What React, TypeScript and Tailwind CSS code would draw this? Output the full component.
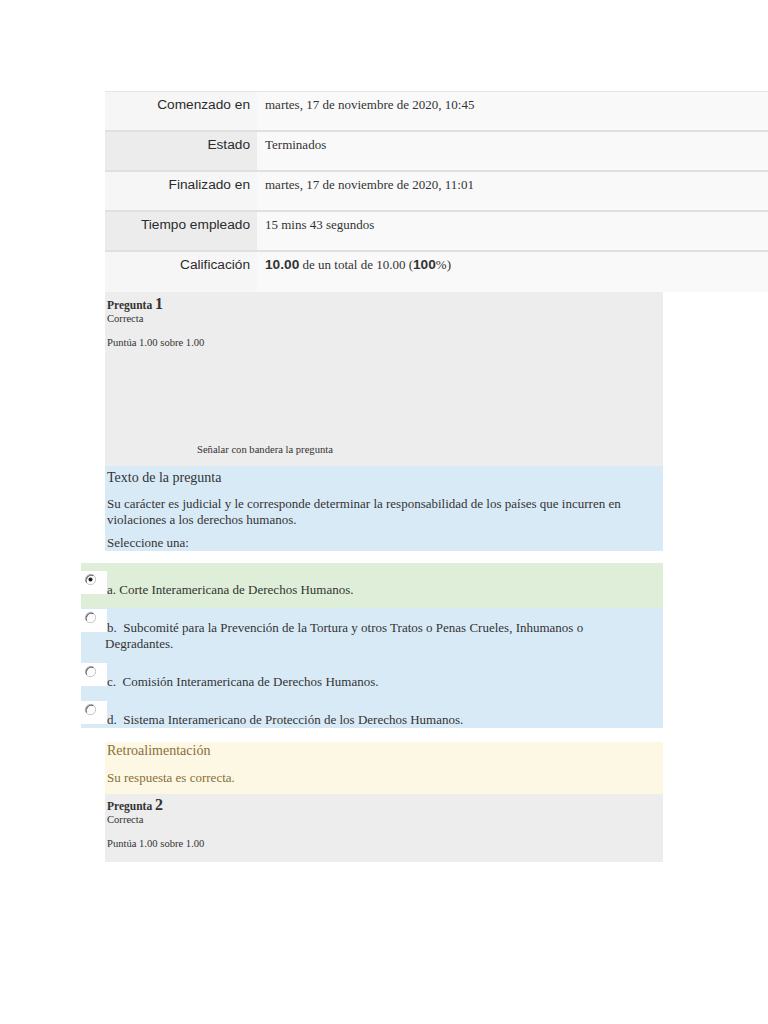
const filas = [
  { etiqueta: 'Comenzado en', valor: 'martes, 17 de noviembre de 2020, 10:45', oscura: false },
  { etiqueta: 'Estado', valor: 'Terminados', oscura: true },
  { etiqueta: 'Finalizado en', valor: 'martes, 17 de noviembre de 2020, 11:01', oscura: false },
  { etiqueta: 'Tiempo empleado', valor: '15 mins 43 segundos', oscura: true },
];

const sans = "font-['Liberation_Sans',Arial,sans-serif]";
const serif = "font-['Liberation_Serif','Times_New_Roman',serif]";

function Radio({ marcado }: { marcado?: boolean }) {
  return (
    <svg width="13" height="13" viewBox="0 0 13 13" className="absolute left-[3px] top-[2px]">
      <circle cx="6.5" cy="6.5" r="5.2" fill="#fdfdfd" stroke="#c4c4c4" strokeWidth="1" />
      <path d="M2.6 9.4 A5.2 5.2 0 0 1 9.4 2.6" fill="none" stroke="#6f6f6f" strokeWidth="1.2" />
      {marcado && <circle cx="6.5" cy="6.5" r="2" fill="#1a1a1a" />}
    </svg>
  );
}

function Opcion({
  texto,
  marcado,
  className,
}: {
  texto: string;
  marcado?: boolean;
  className: string;
}) {
  return (
    <div className={`pl-[24px] -indent-[24px] text-[13px] leading-[16px] text-[#333] ${className}`}>
      <span className="relative inline-block h-[23px] w-[26px] indent-0 bg-white align-baseline">
        <Radio marcado={marcado} />
      </span>
      {texto}
    </div>
  );
}

function Cabecera({ numero, alto, children }: { numero: number; alto?: string; children?: React.ReactNode }) {
  return (
    <div className={`bg-[#ededed] px-[2px] text-[#333] ${serif} ${alto ?? ''}`}>
      <div className="leading-[16px]">
        <span className="text-[11.5px] font-bold">Pregunta </span>
        <span className="text-[16px] font-bold">{numero}</span>
      </div>
      <div className="text-[10.6px] leading-[12px]">Correcta</div>
      <div className="mt-[12px] text-[10.6px] leading-[12px]">Puntúa 1.00 sobre 1.00</div>
      {children}
    </div>
  );
}

export default function App() {
  return (
    <div className="min-h-screen w-full overflow-hidden bg-white">
      <div className="ml-[105px] w-[663px] pt-[91px]">
        <div className="border-t border-[#e6e6e6]">
          {filas.map((f) => (
            <div key={f.etiqueta} className="flex h-[40px] border-b-2 border-[#e0e0e0]">
              <div
                className={`w-[152px] shrink-0 pr-[7px] pt-[3px] text-right text-[13.7px] leading-[20px] text-[#2b2b2b] ${sans} ${
                  f.oscura ? 'bg-[#ececec]' : 'bg-[#f6f6f6]'
                }`}
              >
                {f.etiqueta}
              </div>
              <div className={`flex-1 bg-[#f9f9f9] pl-[8px] pt-[3px] text-[13px] leading-[20px] text-[#333] ${serif}`}>
                {f.valor}
              </div>
            </div>
          ))}
          <div className="flex h-[40px]">
            <div className={`w-[152px] shrink-0 bg-[#f6f6f6] pr-[7px] pt-[3px] text-right text-[13.7px] leading-[20px] text-[#2b2b2b] ${sans}`}>
              Calificación
            </div>
            <div className={`flex-1 bg-[#f9f9f9] pl-[8px] pt-[3px] text-[13px] leading-[20px] text-[#333] ${serif}`}>
              <b className={`${sans} text-[13.7px]`}>10.00</b> de un total de 10.00 (
              <b className={`${sans} text-[13.7px]`}>100</b>%)
            </div>
          </div>
        </div>

        <div className="w-[558px]">
          <div className="pt-[4px] bg-[#ededed]">
            <Cabecera numero={1} alto="h-[170px]">
              <div className="ml-[90px] mt-[95px] text-[10.6px] leading-[12px]">Señalar con bandera la pregunta</div>
            </Cabecera>
          </div>

          <div className={`bg-[#d9eaf7] px-[2px] pt-[4px] text-[#333] ${serif}`}>
            <div className="text-[14px] leading-[16px]">Texto de la pregunta</div>
            <p className="mt-[10px] pr-[20px] text-[13px] leading-[16px]">
              Su carácter es judicial y le corresponde determinar la responsabilidad de los países que incurren en
              violaciones a los derechos humanos.
            </p>
            <div className="mt-[7px] text-[13px] leading-[16px]">Seleccione una:</div>
          </div>

          <div className={`-ml-[24px] mt-[12px] w-[582px] ${serif}`}>
            <Opcion marcado texto="a. Corte Interamericana de Derechos Humanos." className="h-[45px] bg-[#dfeed8] pt-[8px]" />
            <div className="bg-[#d9eaf7]">
              <Opcion
                texto={'b.\u00a0 Subcomité para la Prevención de la Tortura y otros Tratos o Penas Crueles, Inhumanos o Degradantes.'}
                className="h-[52px] pr-[60px] pt-[1px]"
              />
              <Opcion texto={'c.\u00a0 Comisión Interamericana de Derechos Humanos.'} className="h-[38px] pt-[3px]" />
              <Opcion texto={'d.\u00a0 Sistema Interamericano de Protección de los Derechos Humanos.'} className="h-[30px] pt-[3px]" />
            </div>
          </div>

          <div className={`mt-[14px] h-[52px] bg-[#fcf8e3] px-[2px] pt-[1px] text-[#8a6d3b] ${serif}`}>
            <div className="text-[14px] leading-[16px]">Retroalimentación</div>
            <div className="mt-[11px] text-[13px] leading-[16px]">Su respuesta es correcta.</div>
          </div>

          <div className="bg-[#ededed] pb-[12px] pt-[3px]">
            <Cabecera numero={2} />
          </div>
        </div>
      </div>
    </div>
  );
}
